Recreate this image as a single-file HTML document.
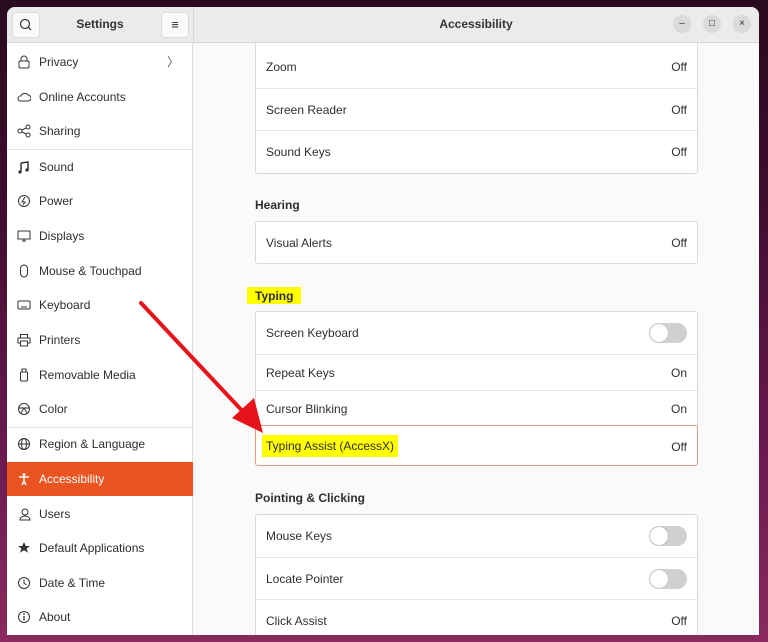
<!DOCTYPE html>
<html><head><meta charset="utf-8"><style>
*{margin:0;padding:0;box-sizing:border-box}
body{width:768px;height:642px;overflow:hidden;position:relative;font-family:"Liberation Sans",sans-serif;font-size:12px;color:#2e2e2e;
background:linear-gradient(180deg,#2a0a1e 0%,#3d0c2e 30%,#6a1a4e 70%,#8a2a5e 100%)}
.win{position:absolute;left:7px;top:7px;width:752px;height:628px;background:#fafafa;border-radius:8px 8px 0 0;overflow:hidden}
.hdr{position:absolute;left:0;top:0;width:752px;height:36px;background:#ebebeb;border-bottom:1px solid #d6d6d6}
.sb{position:absolute;left:0;top:36px;width:186px;height:600px;background:#fff;border-right:1px solid #dcdcdc}
.vsep{position:absolute;left:186px;top:0;width:1px;height:36px;background:#d6d6d6}
.it{position:absolute;left:0;width:186px;height:34px;line-height:34px;padding-left:32px;font-size:12px}
.ic{position:absolute;left:10px;top:10px;width:14px;height:14px}
.box{position:absolute;left:248px;width:443px;background:#fff;border:1px solid #dadada;border-radius:3px}
.row{position:absolute;left:0;width:441px;border-top:1px solid #e6e6e6}
.row span{position:absolute;left:10px}
.row b{position:absolute;right:10px;font-weight:normal}
.lbl{position:absolute;left:248px;font-weight:bold;font-size:12px}
.tg{position:absolute;right:10px;width:38px;height:20px;border-radius:10px;background:#d0d0d0}
.tg:before{content:"";position:absolute;left:1px;top:1px;width:18px;height:18px;border-radius:50%;background:#fff;box-shadow:0 0 1px #888}
.hl{background:#ffff00}
.wb{position:absolute;top:8px;width:18px;height:18px;border-radius:50%;background:#dadada;text-align:center;line-height:18px;font-size:10px;color:#333}
</style></head><body>
<div class="win">
<div class="hdr">
 <div style="position:absolute;left:5px;top:5px;width:28px;height:26px;background:#fafafa;border-radius:4px;border:1px solid #dcdcdc"><svg width="26" height="24"><circle cx="12" cy="11" r="4.5" fill="none" stroke="#333" stroke-width="1.2"/><line x1="15.5" y1="14.5" x2="18" y2="17" stroke="#333" stroke-width="1.2"/></svg></div>
 <div style="position:absolute;left:0;width:186px;top:10px;text-align:center;font-weight:bold;font-size:12px;color:#333">Settings</div>
 <div style="position:absolute;left:154px;top:5px;width:28px;height:26px;background:#fafafa;border-radius:4px;border:1px solid #dcdcdc;text-align:center;line-height:24px;font-size:13px">≡</div>
 <div class="vsep"></div>
 <div style="position:absolute;left:186px;width:566px;top:10px;text-align:center;font-weight:bold;font-size:12px;color:#333">Accessibility</div>
 <div class="wb" style="left:666px">–</div><div class="wb" style="left:696px">□</div><div class="wb" style="left:726px">×</div>
</div>
<div class="sb">
 <div class="it" style="top:2px"><svg class="ic"><rect x="2" y="6" width="10" height="7" rx="1" fill="none" stroke="#333"/><path d="M4 6V4a3 3 0 0 1 6 0v2" fill="none" stroke="#333"/></svg>Privacy<span style="position:absolute;right:14px;color:#555">〉</span></div>
 <div class="it" style="top:37px"><svg class="ic"><path d="M3 11h8a3 3 0 0 0 0-6a4 4 0 0 0-7 1a2.5 2.5 0 0 0-1 5z" fill="none" stroke="#333"/></svg>Online Accounts</div>
 <div class="it" style="top:71px"><svg class="ic"><circle cx="3" cy="7" r="2" fill="none" stroke="#333"/><circle cx="11" cy="3" r="2" fill="none" stroke="#333"/><circle cx="11" cy="11" r="2" fill="none" stroke="#333"/><path d="M5 6l4-2M5 8l4 2" stroke="#333"/></svg>Sharing</div>
 <div style="position:absolute;top:106px;left:0;width:186px;height:1px;background:#e3e3e3"></div>
 <div class="it" style="top:107px"><svg class="ic"><path d="M4 3l7-1v8M4 3v9" stroke="#333" stroke-width="1.5" fill="none"/><circle cx="3" cy="12" r="1.6" fill="#333"/><circle cx="10" cy="10" r="1.6" fill="#333"/></svg>Sound</div>
 <div class="it" style="top:141px"><svg class="ic"><circle cx="7" cy="7" r="5.5" fill="none" stroke="#333"/><path d="M8 3L5 8h3l-2 3" fill="none" stroke="#333"/></svg>Power</div>
 <div class="it" style="top:176px"><svg class="ic"><rect x="1" y="2" width="12" height="8" fill="none" stroke="#333"/><path d="M5 12h4M7 10v2" stroke="#333"/></svg>Displays</div>
 <div class="it" style="top:211px"><svg class="ic"><rect x="3.5" y="1" width="7" height="12" rx="3.5" fill="none" stroke="#333"/></svg>Mouse &amp; Touchpad</div>
 <div class="it" style="top:245px"><svg class="ic"><rect x="1" y="3" width="12" height="8" rx="1" fill="none" stroke="#333"/><path d="M4 9h6" stroke="#333"/></svg>Keyboard</div>
 <div class="it" style="top:280px"><svg class="ic"><rect x="1" y="5" width="12" height="5" fill="none" stroke="#333"/><rect x="3.5" y="1.5" width="7" height="3.5" fill="none" stroke="#333"/><rect x="3.5" y="8" width="7" height="5" fill="#fff" stroke="#333"/></svg>Printers</div>
 <div class="it" style="top:315px"><svg class="ic"><rect x="3.5" y="4" width="7" height="9" rx="1" fill="none" stroke="#333"/><rect x="5" y="1" width="4" height="3" fill="none" stroke="#333"/></svg>Removable Media</div>
 <div class="it" style="top:349px"><svg class="ic"><circle cx="7" cy="7" r="5.5" fill="none" stroke="#333"/><path d="M2 6h10M4 11l3-5l3 5" fill="none" stroke="#333"/></svg>Color</div>
 <div style="position:absolute;top:384px;left:0;width:186px;height:1px;background:#e3e3e3"></div>
 <div class="it" style="top:384px"><svg class="ic"><circle cx="7" cy="7" r="5.5" fill="none" stroke="#333"/><ellipse cx="7" cy="7" rx="2.5" ry="5.5" fill="none" stroke="#333"/><path d="M1.5 7h11" stroke="#333"/></svg>Region &amp; Language</div>
 <div class="it" style="top:419px;background:#e95420;color:#fff"><svg class="ic"><circle cx="7" cy="2.5" r="1.5" fill="#fff"/><path d="M2 5h10M7 5v4M7 9l-2 4M7 9l2 4" stroke="#fff" stroke-width="1.4" fill="none"/></svg>Accessibility</div>
 <div class="it" style="top:454px"><svg class="ic"><circle cx="8" cy="5" r="3" fill="none" stroke="#333"/><path d="M3 13a5 4 0 0 1 10 0z" fill="none" stroke="#333"/></svg>Users</div>
 <div class="it" style="top:488px"><svg class="ic"><path d="M7 1l1.8 4h4.2l-3.4 2.6 1.3 4.2L7 9.3 3.1 11.8l1.3-4.2L1 5h4.2z" fill="#333"/></svg>Default Applications</div>
 <div class="it" style="top:523px"><svg class="ic"><circle cx="7" cy="7" r="5.5" fill="none" stroke="#333"/><path d="M7 3.5V7l2.5 2" fill="none" stroke="#333"/></svg>Date &amp; Time</div>
 <div class="it" style="top:557px"><svg class="ic"><circle cx="7" cy="7" r="5.5" fill="none" stroke="#333"/><path d="M7 6v4.5" stroke="#333" stroke-width="1.3"/><circle cx="7" cy="4" r=".9" fill="#333"/></svg>About</div>
</div>

<div class="box" style="top:36px;height:131px;border-top:none;border-radius:0 0 3px 3px">
 <div class="row" style="top:0;height:44px;border-top:none"><span style="top:17px">Zoom</span><b style="top:17px">Off</b></div>
 <div class="row" style="top:45px;height:42px"><span style="top:14px">Screen Reader</span><b style="top:14px">Off</b></div>
 <div class="row" style="top:87px;height:42px"><span style="top:14px">Sound Keys</span><b style="top:14px">Off</b></div>
</div>
<div class="lbl" style="top:191px">Hearing</div>
<div class="box" style="top:214px;height:43px">
 <div class="row" style="top:0;height:42px;border-top:none"><span style="top:14px">Visual Alerts</span><b style="top:14px">Off</b></div>
</div>
<div class="lbl hl" style="top:280px;left:240px;padding:2px 8px 1px 8px">Typing</div>
<div class="box" style="top:304px;height:115px;border-bottom:none;border-radius:3px 3px 0 0">
 <div class="row" style="top:0;height:42px;border-top:none"><span style="top:14px">Screen Keyboard</span><div class="tg" style="top:11px"></div></div>
 <div class="row" style="top:42px;height:36px"><span style="top:11px">Repeat Keys</span><b style="top:11px">On</b></div>
 <div class="row" style="top:78px;height:36px"><span style="top:11px">Cursor Blinking</span><b style="top:11px">On</b></div>
</div>
<div style="position:absolute;left:248px;top:418px;width:443px;height:41px;background:#fff;border:1px solid #eb9a80;border-radius:3px">
 <span class="hl" style="position:absolute;left:6px;top:9px;padding:4px 4px">Typing Assist (AccessX)</span><b style="position:absolute;right:10px;top:14px;font-weight:normal">Off</b>
</div>
<div class="lbl" style="top:484px">Pointing &amp; Clicking</div>
<div class="box" style="top:507px;height:130px">
 <div class="row" style="top:0;height:42px;border-top:none"><span style="top:14px">Mouse Keys</span><div class="tg" style="top:11px"></div></div>
 <div class="row" style="top:42px;height:42px"><span style="top:14px">Locate Pointer</span><div class="tg" style="top:11px"></div></div>
 <div class="row" style="top:84px;height:42px"><span style="top:14px">Click Assist</span><b style="top:14px">Off</b></div>
</div>
</div>
<svg style="position:absolute;left:0;top:0" width="768" height="642">
 <line x1="141" y1="303" x2="248" y2="417" stroke="#e5141b" stroke-width="4" stroke-linecap="round"/>
 <polygon points="263,433 232,418 254,398" fill="#e5141b"/>
</svg>
</body></html>
